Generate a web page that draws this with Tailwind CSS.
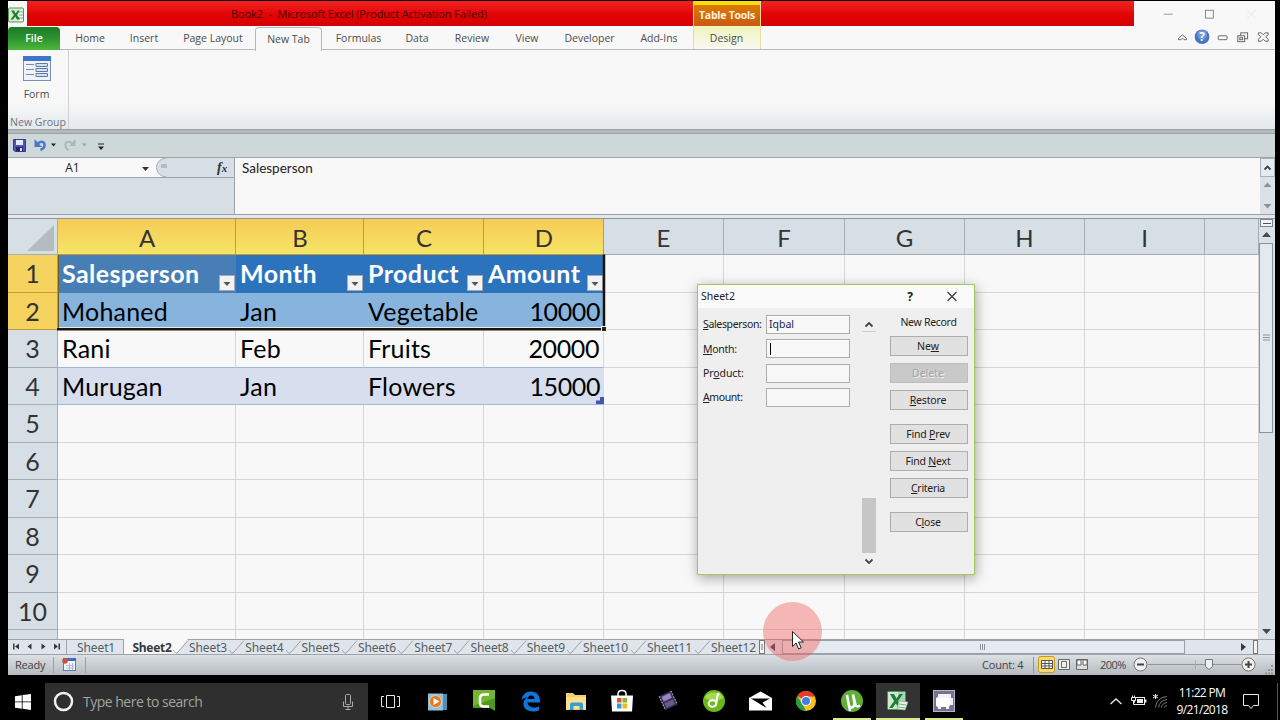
<!DOCTYPE html>
<html>

<head>
    <meta charset="utf-8">
    <script src="https://cdn.jsdelivr.net/npm/@tailwindcss/browser@4"></script>
    <title>Book2 - Microsoft Excel</title>
</head>

<body class="bg-black">
    <div class="relative flex flex-col w-[1280px] h-[720px] overflow-hidden bg-black pt-px font-['Open_Sans',sans-serif]">

        <!-- excel window -->
        <div class="ml-2 w-[1267px] h-[674px] flex flex-col bg-[#f8f8f8] shrink-0">

            <!-- title bar and ribbon tabs -->
            <div class="flex h-[49px] shrink-0 border-b border-[#b3bcbc] relative">
                <div class="flex flex-col w-[685px]">
                    <div class="flex h-[25px]">
                        <div class="w-[19px] flex items-center pt-[2px]">
                            <svg width="16" height="16" viewBox="0 0 16 16">
                                <rect x=".5" y="1" width="15" height="14" rx="1" fill="#d8ead6" stroke="#4f9a50" />
                                <rect x="11" y="3" width="4" height="11" fill="#fff" />
                                <path d="M11 5h4M11 8h4M11 11h4" stroke="#5fa560" />
                                <path d="M3 3.500h3l1.700 3L9.700 3.500h2L9 8l3.200 4.500H9L7.300 9.600 5 12.500H2.500L6 8z" fill="#1e7a2e" />
                            </svg>
                        </div>
                        <div class="flex-1 bg-linear-to-b from-[#f42020] via-[#e40505] to-[#d40000] text-[11px] leading-[26px] text-[#4a0000] pl-[204px] whitespace-pre tracking-[-0.1px]">Book2  -  Microsoft Excel (Product Activation Failed)</div>
                    </div>
                    <div class="flex h-[23px] mt-[1px] text-[10.5px] leading-[23px] text-[#4c4c4c] text-center">
                        <div class="w-[52px] rounded-t-sm bg-linear-to-b from-[#1d7a24] via-[#2b9430] to-[#4db83c] text-white font-semibold">File</div>
                        <div class="w-[3px]"></div>
                        <div class="w-[54px]">Home</div>
                        <div class="w-[54px]">Insert</div>
                        <div class="w-[84px]">Page Layout</div>
                        <div class="w-[67px] border border-b-0 border-[#b3bcbc] rounded-t-sm bg-[#f8f8f8] h-6 leading-[22px] z-10">New Tab</div>
                        <div class="w-[73px]">Formulas</div>
                        <div class="w-[44px]">Data</div>
                        <div class="w-[66px]">Review</div>
                        <div class="w-[44px]">View</div>
                        <div class="w-[81px]">Developer</div>
                        <div class="w-[58px]">Add-Ins</div>
                    </div>
                </div>
                <div class="w-[68px] flex flex-col text-center border-x border-[#e8dba0]">
                    <div class="h-[25px] bg-linear-to-b from-[#dd7a00] to-[#c85a10] border-t-4 border-[#f8dc10] text-[10.5px] leading-[21px] font-bold text-[#fff3e0] whitespace-nowrap tracking-[-0.25px]">Table Tools</div>
                    <div class="h-[23px] bg-linear-to-b from-[#f0f5b8] to-[#f8f8f4] text-[10.5px] leading-[25px] pr-px text-[#4c4c4c]">Design</div>
                </div>
                <div class="w-[373px] h-[25px] bg-linear-to-b from-[#f42020] via-[#e40505] to-[#d40000]"></div>
                <div class="flex-1 flex flex-col">
                    <svg width="141" height="49" viewBox="1134 1 141 49" fill="none">
                        <path d="M1163 14.500h9" stroke="#999" />
                        <rect x="1205.500" y="10.500" width="8" height="8" stroke="#888" />
                        <path d="M1248 10l9 9M1257 10l-9 9" stroke="#e6e6e6" />
                        <path d="M1178 40.500v-1.500l4-3.500 4 3.500v1.500h-2.500l-1.500-1.500-1.500 1.500z" stroke="#666" />
                        <circle cx="1202" cy="37.500" r="7.500" fill="#4377c4" />
                        <circle cx="1202" cy="35.500" r="5" fill="#6a98da" />
                        <text x="1202" y="42" font-size="12" font-weight="700" text-anchor="middle" fill="#fff">?</text>
                        <rect x="1218.500" y="36.500" width="9" height="4" rx="1" stroke="#666" />
                        <rect x="1241.500" y="33.500" width="7" height="6" stroke="#666" />
                        <rect x="1238.500" y="36.500" width="7" height="6" fill="#f8f8f8" stroke="#666" />
                        <rect x="1240.500" y="38.500" width="3" height="2" stroke="#666" />
                        <path d="M1259.500 33.500h3l2 2 2-2h3v2l-2.500 2 2.500 2.500v2h-3l-2-2-2 2h-3v-2l2.500-2.500-2.500-2z" stroke="#666" />
                    </svg>
                </div>
            </div>

            <!-- ribbon -->
            <div class="flex h-[79px] shrink-0 bg-linear-to-b from-[#f8f8f8] from-65% to-[#e4e8eb]">
                <div class="w-[61px] flex flex-col items-center border-r border-[#cdd2d6] text-[#4c4c4c]">
                    <svg class="mt-[6px] mr-[2px]" width="28" height="26" viewBox="0 0 28 26">
                        <rect x=".5" y=".5" width="27" height="24" fill="#eef2fa" stroke="#7a90b8" />
                        <rect x="0" y="0" width="28" height="5" fill="#3f74c8" />
                        <path d="M3 8.500h8M3 13.500h8M3 18.500h8" stroke="#7c8ba8" />
                        <path d="M13 7.500h11.500v3H13zM13 12.500h11.500v3H13zM13 17.500h11.500v3H13z" fill="#d6dff0" stroke="#6478a4" />
                    </svg>
                    <div class="text-[10.5px] leading-[14px] mt-[5px] mr-[3px]">Form</div>
                    <div class="text-[10.5px] leading-[14px] mt-[14px] text-[#6c747c] whitespace-nowrap">New Group</div>
                </div>
            </div>
            <div class="h-[5px] shrink-0 bg-[#b3b8bc] border-t border-b border-[#9aa0a5]"></div>

            <!-- quick access toolbar -->
            <div class="h-[23px] shrink-0 bg-[#ced8d9] flex items-center">
                <svg width="110" height="23" viewBox="8 134 110 23" fill="none">
                    <path d="M13.500 139.500h12v12h-10.500l-1.500-1.500z" fill="#4d55b8" stroke="#34389a" />
                    <rect x="16" y="140" width="7" height="5" fill="#e8ecf8" />
                    <rect x="16" y="147" width="7" height="4" fill="#22266a" />
                    <rect x="20" y="148" width="2" height="3" fill="#dde" />
                    <path d="M38 143.500c3-3 7-2 6.500 2 0 2-1.500 3.500-4 4.500" stroke="#4a78cc" stroke-width="2.500" />
                    <path d="M34.500 139v8h7.500z" fill="#4a78cc" />
                    <path d="M51 143.500h5l-2.500 3zM98 146.500h6l-3 3.500z" fill="#222" />
                    <path d="M98 144h6" stroke="#222" />
                    <path d="M72 143.500c-3-3-7-2-6.500 2 0 2 1 3.500 3 4.500" stroke="#aeb6b8" stroke-width="2" />
                    <path d="M75.500 139v7h-6.500z" fill="#aeb6b8" />
                    <path d="M82 143.500h4.500l-2.200 3z" fill="#9aa2a5" />
                </svg>
            </div>

            <!-- formula bar -->
            <div class="flex h-[58px] shrink-0 border-t border-b border-[#9da3a8]">
                <div class="w-[227px] bg-[#d7dfe6] border-r border-[#9da3a8]">
                    <div class="flex h-[20px] border-b border-[#9da3a8] items-center">
                        <div class="w-[129px] h-full bg-[#f8f8f8] text-center text-[12px] leading-[20px] text-[#222]">A1</div>
                        <svg width="97" height="19" viewBox="137 158 97 19">
                            <rect x="137" y="158" width="26" height="19" fill="#f8f8f8" />
                            <rect x="163" y="158" width="71" height="19" fill="#d7dfe6" />
                            <path d="M166 158.200a9.500 9.300 0 0 0 0 18.600" fill="#d7dfe6" stroke="#a8aeb2" />
                            <rect x="161" y="164" width="6" height="4" rx="1" fill="#b4babf" />
                            <path d="M142 167h7l-3.500 4z" fill="#333" />
                            <text x="217" y="172" font-family="Liberation Serif" font-style="italic" font-weight="700" font-size="14" fill="#333">f<tspan font-size="11">x</tspan></text>
                        </svg>
                    </div>
                </div>
                <div class="flex-1 pl-[7px] font-[Lato,sans-serif] text-[13.5px] leading-[20px] text-[#222]">Salesperson</div>
                <svg width="15" height="56" viewBox="0 0 15 56">
                    <rect width="15" height="56" fill="#dbe2e7" />
                    <rect x=".5" y=".5" width="14" height="18" fill="#e6ebef" stroke="#a9b1b8" />
                    <path d="M4.500 11.500l3-3 3 3" stroke="#444" stroke-width="1.800" fill="none" />
                    <path d="M3.500 29h8l-4-4.500zM3.500 46h8l-4 4.500z" fill="#8a9297" />
                </svg>
            </div>
            <div class="h-[4px] shrink-0 bg-[#e3e8ee] border-b border-[#8e969c]"></div>

            <!-- sheet -->
            <div class="flex h-[420px] shrink-0">
                <div id="sheet" class="relative w-[1251px] h-[420px] overflow-hidden font-[Lato,sans-serif]"></div>
                <svg width="16" height="420" viewBox="1259 219 16 420">
                    <rect x="1259" y="219" width="16" height="420" fill="#dbe2e7" />
                    <rect x="1260.500" y="219.500" width="12" height="7" fill="#f2f4f6" stroke="#7d858b" />
                    <path d="M1263 223.500h8" stroke="#555" />
                    <path d="M1262 237h9l-4.500-5zM1262 629h9l-4.500 5z" fill="#444c52" />
                    <rect x="1259.500" y="243.500" width="13" height="189" fill="#e4e9ee" stroke="#8b949c" />
                    <path d="M1263 335h7M1263 337.500h7M1263 340h7" stroke="#8b949c" />
                </svg>
            </div>

            <!-- sheet tabs and horizontal scroll -->
            <div class="flex h-[16px] shrink-0 border-t border-b border-[#9da3a8] bg-[#dfe5ea]">
                <svg class="shrink-0" width="58" height="14" viewBox="8 640 58 14" fill="#333b42">
                    <path d="M13 643.500h1.500v6H13zM19 643.500v6l-4-3zM31.500 643.500v6l-4-3zM41.500 643.500v6l4-3zM54 643.500v6l4-3zM58.500 643.500H60v6h-1.500z" />
                </svg>
                <div id="tabs" class="flex h-[14px] w-[693px] text-[12px] leading-[16px] text-[#555d63] font-['Noto_Sans',sans-serif]"></div>
                <svg class="shrink-0" width="508" height="14" viewBox="759 640 508 14">
                    <rect x="759.500" y="640.500" width="5" height="13" fill="#f4f4f4" stroke="#777" />
                    <path d="M762 644v6" stroke="#777" />
                    <path d="M775 643v8l-5-4zM1241 643v8l5-4z" fill="#333b42" />
                    <rect x="782.500" y="640.500" width="402" height="13" fill="#e6ebf0" stroke="#9aa2a9" />
                    <path d="M980.500 644v6M982.500 644v6M984.500 644v6" stroke="#8b949c" />
                    <rect x="1253.500" y="640.500" width="4" height="13" fill="#f4f4f4" stroke="#777" />
                </svg>
            </div>

            <!-- status bar -->
            <div class="flex flex-1 bg-linear-to-b from-[#dde1e4] to-[#b4babf] text-[11px] leading-[20px] text-[#444]">
                <div class="w-[44px] pl-[7px] tracking-[-0.2px]">Ready</div>
                <svg width="930" height="20" viewBox="52 655 930 20">
                    <path d="M53.500 657v16M85.500 657v16" stroke="#9aa0a6" />
                    <rect x="63.500" y="658.500" width="12" height="12" fill="#f4f7fc" stroke="#5a7ab8" />
                    <rect x="63" y="658" width="13" height="3" fill="#3f6cc0" />
                    <path d="M66 665.500h8M66 668h8M69.500 663v7M72.500 663v7" stroke="#a8b8d8" />
                    <circle cx="65" cy="661" r="2.800" fill="#cc5236" />
                </svg>
                <div class="w-[51px] whitespace-nowrap tracking-[-0.2px]">Count: 4</div>
                <svg width="66" height="20" viewBox="1033 655 66 20" fill="none">
                    <path d="M1033.500 657v16" stroke="#8b9298" />
                    <rect x="1038.500" y="656.500" width="16" height="16" rx="2" fill="#fbd96a" stroke="#c79a20" />
                    <path d="M1041.500 660.500h11v8h-11zM1041 663.500h12M1041 666h12M1045 660v9M1049 660v9" stroke="#555" fill="#fff" />
                    <path d="M1058.500 659.500h11v10h-11zM1061.500 661.500h5v6h-5z" stroke="#666" fill="#eee" />
                    <path d="M1076.500 659.500h11v10h-11z" stroke="#666" fill="#ddd" />
                    <path d="M1077 660h4v5h-4zM1083 660h4v5h-4z" stroke="#666" fill="#fff" />
                </svg>
                <div class="w-[30px] pl-px whitespace-nowrap tracking-[-0.5px]">200%</div>
                <svg width="138" height="20" viewBox="1129 655 138 20" fill="none">
                    <path d="M1148 664.500h93" stroke="#8f979d" />
                    <path d="M1195.500 660v9" stroke="#a8afb5" />
                    <circle cx="1140.500" cy="664.500" r="6.500" fill="#eef0f2" stroke="#777" />
                    <path d="M1137 664.500h7" stroke="#444" stroke-width="2" />
                    <path d="M1205.500 659.500h7v7l-3.500 3-3.500-3z" fill="#eef0f2" stroke="#777" />
                    <circle cx="1248.500" cy="664.500" r="6.500" fill="#eef0f2" stroke="#777" />
                    <path d="M1245 664.500h7M1248.500 661v7" stroke="#444" stroke-width="2" />
                </svg>
                <svg class="-ml-[2px]" width="10" height="20" viewBox="0 0 10 20">
                    <path d="M6 11h2M3 15h2M6 15h2M0 18.500h2M3 18.500h2M6 18.500h2" stroke="#8b9298" stroke-width="2" />
                </svg>
            </div>
        </div>

        <!-- taskbar -->
        <div class="flex w-[1280px] mt-[8px] h-[37px] shrink-0 items-stretch">
            <div class="w-[45px] flex items-center justify-center">
                <svg width="16" height="16" viewBox="0 0 16 16" fill="#fff">
                    <path d="M0 2.200L6.800 1.200v6.300H0zM7.600 1.100L16 0v7.500H7.600zM0 8.300h6.800v6.400L0 13.800zM7.600 8.300H16V16l-8.400-1.200z" />
                </svg>
            </div>
            <div class="w-[323px] bg-[#2f2f2f] flex items-center pl-[8px] pr-[14px]">
                <svg width="21" height="21" viewBox="0 0 21 21">
                    <circle cx="10.500" cy="10.500" r="8.500" fill="none" stroke="#f2f2f2" stroke-width="2.500" />
                </svg>
                <div class="flex-1 pl-[9px] text-[14px] leading-[20px] text-[#a3a3a3] tracking-[-0.5px]">Type here to search</div>
                <svg width="12" height="16" viewBox="0 0 12 16" fill="none" stroke="#aaa">
                    <rect x="3.500" y=".5" width="5" height="10" rx="1" />
                    <path d="M1.500 7.500v5h9v-5M6 12.500V15M3.500 15.500h5" />
                </svg>
            </div>
            <svg width="600" height="37" viewBox="368 683 600 37" fill="none">
                <!-- task view -->
                <path d="M386.500 695.500h8v12h-8zM384 696.500h-2.500v10H384M397 696.500h2.500v10H397" stroke="#e8e8e8" />
                <!-- media player -->
                <rect x="433" y="694" width="14" height="16" fill="#4f8fb8" />
                <rect x="428" y="693.500" width="15" height="17" fill="#8fc3e2" />
                <circle cx="435.500" cy="701.500" r="6" fill="#e87722" stroke="#f5c9a0" />
                <path d="M433.500 698v7l6-3.500z" fill="#fff" />
                <!-- camtasia -->
                <path d="M473 690h22v21l-5-3h-17z" fill="#4f9a1e" />
                <path d="M473 690h22v8l-22 8z" fill="#72b52e" />
                <path d="M489 694.500h-5q-4 0-4 4v4q0 4 4 4h5" stroke="#fff" stroke-width="2.600" />
                <!-- edge -->
                <path d="M521.500 700c1-6 5-8.500 9.500-8.500 5.500 0 9 4 9 9v2h-12.500c.3 3.500 3.500 5 6.500 5 2 0 4-.5 5-1.300v4c-1.500.9-4 1.300-6 1.300-6 0-10.500-4-9.500-9 .5-2.500 2-4 4-5-2.500.2-5 1-6 2.500zM527.500 699h7c0-2.500-1.300-3.500-3.300-3.500s-3.400 1.300-3.700 3.500z" fill="#1176d8" fill-rule="evenodd" />
                <!-- explorer -->
                <path d="M566 693h7l2 2h11v15h-20z" fill="#f3cf6b" />
                <path d="M566 697h20v12h-20z" fill="#fbe08f" />
                <path d="M570 710v-5.500q0-2 2-2h9q2 0 2 2v5.500h-3.500v-4h-6v4z" fill="#36a0d4" />
                <!-- store -->
                <path d="M618 696v-2q0-3.500 4-3.500t4 3.500v2" stroke="#fff" stroke-width="1.500" />
                <path d="M611 695.500h22l-1 16h-20z" fill="#fff" />
                <path d="M617 698h4.500v4.500H617z" fill="#e8512a" />
                <path d="M622.500 698h4.500v4.500h-4.500z" fill="#7fb92c" />
                <path d="M617 703.500h4.500v5H617z" fill="#2a9fe0" />
                <path d="M622.500 703.500h4.500v5h-4.500z" fill="#f8b518" />
                <!-- movie strip -->
                <g transform="rotate(-25 668 700)">
                    <path d="M661 693h14v15h-14z" fill="#3b3450" />
                    <path d="M663.500 694.500h9v5h-9z" fill="#9a83c8" />
                    <path d="M663.500 701.500h9v5h-9z" fill="#6a5a92" />
                    <path d="M661.500 693v15M674.500 693v15" stroke="#b8b4c4" stroke-dasharray="1.500 1.500" />
                </g>
                <!-- dj -->
                <circle cx="714" cy="701" r="11" fill="#6cb81c" />
                <path d="M704.500 698a10 8 0 0 1 19 0q-9.500 5-19 0z" fill="#a4d850" />
                <ellipse cx="712.500" cy="703.500" rx="3.800" ry="3.200" stroke="#fff" stroke-width="2" />
                <path d="M715.500 705.500q1.500-4 1.500-8 .3-3.500 2.500-4" stroke="#fff" stroke-width="2" />
                <!-- mail -->
                <path d="M749 698l11.500-6.500L772 698v12.500h-23z" fill="#fff" />
                <path d="M751 698.500h19l-7.500 4 4 5.500z" fill="#000" />
                <!-- chrome -->
                <circle cx="806" cy="701" r="10" fill="#fbc116" />
                <path d="M797.300 696L802 703.500 806 711A10 10 0 0 1 797.300 696z" fill="#2a9c48" />
                <path d="M806 701L797.300 696A10 10 0 0 1 814.900 696.500H806z" fill="#e33b2e" />
                <circle cx="806" cy="701" r="5" fill="#fff" />
                <circle cx="806" cy="701" r="4" fill="#3f7fe8" />
                <!-- utorrent -->
                <circle cx="852" cy="701" r="11" fill="#5fae38" />
                <path d="M847 695l2 11q.5 2 2.500 1.500 3-.5 3-4l-1.500-9 2.500 10q1 3 4.500 1" stroke="#fff" stroke-width="2.500" />
                <path d="M849 705l1 6" stroke="#fff" stroke-width="2.500" />
                <!-- excel, active -->
                <rect x="876" y="683" width="44" height="37" fill="#333" />
                <rect x="887.500" y="691.500" width="18" height="18" rx="1" fill="#cfe8cf" stroke="#3f9a54" />
                <path d="M898 692h7v17h-7z" fill="#a9d8b0" />
                <path d="M890 694h4l2.500 4.500 3-4.500h3.500l-5 7 4.500 7h-4l-2.700-4.500-3.200 4.500h-3.500l5-7z" fill="#1d7f3a" />
                <path d="M899 701l9 1-3 8-8-1z" fill="#e8f4e8" stroke="#74b584" stroke-width=".7" />
                <path d="M899 704l7 1M898 707l7 1" stroke="#74b584" />
                <!-- recorder -->
                <rect x="933.500" y="690.500" width="21" height="21" fill="#77738f" stroke="#b8b5c8" />
                <rect x="936" y="697" width="14" height="10" rx="2" fill="#fff" />
                <path d="M938 694h13v4h-13zM950 698h3v7h-3zM938 707h3v2h-3zM946 707h3v2h-3z" fill="#f2f2f8" />
                <path d="M833 718h38v2h-38zM876 718h44v2h-44zM925 718h38v2h-38z" fill="#d8ea90" />
            </svg>
            <svg class="ml-[136px]" width="70" height="37" viewBox="1104 683 70 37" fill="none">
                <path d="M1110.500 704l5.500-5 5.500 5" stroke="#e8e8e8" stroke-width="1.300" />
                <rect x="1134.500" y="697.500" width="10" height="7" stroke="#eee" />
                <path d="M1137 699h6v4h-6zM1145 699.500h1.500v3H1145z" fill="#eee" />
                <path d="M1131.500 697.500h4v3h-4zM1132.500 695.500v2M1134.500 695.500v2M1133.500 701v3.500h2" stroke="#eee" fill="#000" />
                <path d="M1155.500 694v5M1153 695l5 3M1158 695l-5 3" stroke="#eee" />
                <path d="M1155.500 707.500q1-10 11.500-11M1158.500 707.500q1-7 8.500-8M1161.500 707.500q.5-4 5.500-5M1164.500 707.500q0-1.500 2.500-2" stroke="#7a7a7a" />
            </svg>
            <div class="w-[56px] text-[12px] leading-[17px] text-white text-center whitespace-nowrap tracking-[-0.65px] pt-px">11:22 PM<br>9/21/2018</div>
            <svg class="ml-[11px]" width="39" height="37" viewBox="1241 683 39 37" fill="none">
                <path d="M1243.500 694.500h15v11h-5l-2.500 3-2.500-3h-5z" stroke="#e8e8e8" />
                <path d="M1277.500 683v37" stroke="#555" />
            </svg>
        </div>

        <!-- data form -->
        <div class="absolute left-[697px] top-[284px] w-[278px] h-[291px] border border-[#a3c65a] bg-[#efefef] shadow-[1px_3px_12px_rgba(0,0,0,0.35)] font-['Noto_Sans',sans-serif] text-[10.5px] text-[#222] flex flex-col">
            <div class="flex h-[23px] bg-[#fafafa] leading-[23px] pl-[3px] shrink-0">
                <div class="w-[199px]">Sheet2</div>
                <div class="w-[20px] text-center font-bold text-[12px]">?</div>
                <svg class="ml-[26px]" width="12" height="23" viewBox="0 0 12 23">
                    <path d="M1.500 7l9 9M10.500 7l-9 9" stroke="#333" stroke-width="1.100" />
                </svg>
            </div>
            <div class="flex flex-1">
                <div class="w-[153px] pl-[5px] pt-[7px] flex flex-col gap-[5.400px]">
                    <div class="flex h-[19px] items-center"><div class="w-[63px] shrink-0 pt-px tracking-[-0.35px]"><u>S</u>alesperson:</div><div class="w-[84px] h-[19px] border border-[#adadad] bg-[#f8f8f8] pl-[2px] leading-[17px] text-[#1c2350]">Iqbal</div></div>
                    <div class="flex h-[19px] items-center"><div class="w-[63px] shrink-0 pt-px tracking-[-0.3px]"><u>M</u>onth:</div><div class="w-[84px] h-[19px] border border-[#adadad] bg-[#f8f8f8] pl-[3px] pt-[3px]"><div class="w-px h-[12px] bg-black"></div></div></div>
                    <div class="flex h-[19px] items-center"><div class="w-[63px] shrink-0 pt-px tracking-[-0.1px]">Pr<u>o</u>duct:</div><div class="w-[84px] h-[19px] border border-[#adadad] bg-[#f8f8f8]"></div></div>
                    <div class="flex h-[19px] items-center"><div class="w-[63px] shrink-0 pt-px tracking-[-0.4px]"><u>A</u>mount:</div><div class="w-[84px] h-[19px] border border-[#adadad] bg-[#f8f8f8]"></div></div>
                </div>
                <svg class="ml-[11px]" width="14" height="266" viewBox="862 308 14 266" fill="none">
                    <path d="M865.500 326.500l3.500-3.500 3.500 3.500M865.500 559.500l3.500 3.500 3.500-3.500" stroke="#444" stroke-width="1.800" />
                    <path d="M862 331.500h14" stroke="#ccc" />
                    <rect x="862" y="498" width="14" height="55" fill="#c6c6c6" />
                </svg>
                <div class="ml-[14px] w-[78px] flex flex-col text-center leading-[19px]">
                    <div class="mt-[5px] mb-[4px] whitespace-nowrap tracking-[-0.3px] pr-px">New Record</div>
                    <div class="h-[20px] border border-[#adadad] bg-[#e1e1e1] pr-[2px]">Ne<u>w</u></div>
                    <div class="mt-[7px] h-[20px] border border-[#bdbdbd] bg-[#c9c9c9] text-[#a2a2a2] text-shadow-[1px_1px_0_#f0f0f0] pr-[2px]">Delete</div>
                    <div class="mt-[7px] h-[20px] border border-[#adadad] bg-[#e1e1e1] pr-[2px] tracking-[-0.15px]"><u>R</u>estore</div>
                    <div class="mt-[14px] h-[20px] border border-[#adadad] bg-[#e1e1e1] pr-[2px] tracking-[-0.2px]">Find <u>P</u>rev</div>
                    <div class="mt-[7px] h-[20px] border border-[#adadad] bg-[#e1e1e1] pr-[2px] tracking-[-0.2px]">Find <u>N</u>ext</div>
                    <div class="mt-[7px] h-[20px] border border-[#adadad] bg-[#e1e1e1] pr-[2px] tracking-[-0.3px]"><u>C</u>riteria</div>
                    <div class="mt-[14px] h-[20px] border border-[#adadad] bg-[#e1e1e1] pr-[2px] tracking-[-0.2px]">C<u>l</u>ose</div>
                </div>
            </div>
        </div>

        <!-- mouse pointer with click highlight -->
        <svg class="absolute left-[762px] top-[601px]" width="60" height="60" viewBox="0 0 60 60">
            <circle cx="30.500" cy="30.500" r="29.500" fill="#f05a5a" fill-opacity=".42" />
            <path d="M30.500 30.500v15l3.500-3.500 2.700 6 2.500-1.200-2.700-5.800h5z" fill="#fff" stroke="#222" />
        </svg>
    </div>

    <script>
        var sheet = document.getElementById("sheet");
        var columns = ["A", "B", "C", "D", "E", "F", "G", "H", "I", ""];
        var data = [
            ["Salesperson", "Month", "Product", "Amount"],
            ["Mohaned", "Jan", "Vegetable", "10000"],
            ["Rani", "Feb", "Fruits", "20000"],
            ["Murugan", "Jan", "Flowers", "15000"]
        ];
        var rowStart = '<div class="grid grid-cols-[50px_178px_128px_120px_120px_120px_121px_120px_120px_120px_54px] ';

        // column letters
        var html = rowStart + 'h-[36px] grid-rows-[36px] text-[24px] leading-[38px] text-center text-[#333]">';
        html += '<div class="bg-[#d7dfe6] border-r border-b border-[#a5adb5] flex items-end justify-end pr-[3px] pb-[3px]"><svg width="27" height="26" viewBox="0 0 27 26"><path d="M27 0v26H0z" fill="#b4bcbf" /></svg></div>';
        for (var i = 0; i < columns.length; i++) {
            if (i < 4) {
                html += '<div class="pl-px bg-linear-to-b from-[#f6cb55] to-[#f5e566] border-r border-b border-[#c39a3c]">' + columns[i] + '</div>';
            } else {
                html += '<div class="bg-[#d7dfe6] border-r border-b border-[#a5adb5]">' + columns[i] + '</div>';
            }
        }
        html += '</div>';

        // rows are 37.5px high, so every second one is a pixel shorter
        for (var r = 1; r <= 11; r++) {
            html += rowStart + (r % 2 == 1 ? 'h-[38px] grid-rows-[38px] ' : 'h-[37px] grid-rows-[37px] ') + 'text-[25px] leading-[37px] text-black">';
            html += '<div class="text-center border-r border-b text-[#333] ' + (r <= 2 ? 'bg-[#f6d35e] border-[#c39a3c]' : 'bg-[#d7dfe6] border-[#a5adb5]') + '">' + (r < 11 ? r : '') + '</div>';
            for (var c = 0; c < columns.length; c++) {
                var text = r <= 4 && c < 4 ? data[r - 1][c] : '';
                var look = 'border-r border-b border-[#d6d6d6]';
                if (c < 4 && r == 1) look = 'relative font-bold text-white tracking-[0.4px] ' + (c == 0 ? 'bg-[#467eb5]' : 'bg-[#2b73bd]');
                if (c < 4 && r == 2) look = 'bg-[#86b4dd]';
                if (c < 4 && r == 3) look = 'border-r border-b border-[#d6d6d6] border-b-[#9db8d8]';
                if (c < 4 && r == 4) look = 'bg-[#d7deee] border-b border-[#9db8d8]';
                if (c < 3 && r > 1) look += ' tracking-[0.2px]';
                if (c == 3 && r > 1) look += ' text-right pr-[4px] tracking-[-0.4px]';
                html += '<div class="pl-[4px] whitespace-nowrap ' + look + '">' + text;
                if (r == 1 && c < 4) {
                    html += '<svg class="absolute right-px bottom-[2px]" width="16" height="16" viewBox="0 0 16 16"><rect x=".5" y=".5" width="15" height="15" fill="#f2f3f5" stroke="#a8acb2" /><path d="M4.500 7h7L8 11z" fill="#555" /></svg>';
                }
                html += '</div>';
            }
            html += '</div>';
        }

        // selection outline A1:D2 and the table's corner handle
        html += '<svg class="absolute left-[49px] top-[35px]" width="550" height="152" viewBox="57 254 550 152" fill="none"><path d="M58 327.500h545" stroke="#dfe9f2" /><path d="M58.500 329V255" stroke="#6b5a2a" /><path d="M57 329.300h545M604 254.500V326" stroke="#1c1408" stroke-width="2.500" /><rect x="601.500" y="326.500" width="5" height="5" fill="#222" stroke="#f8f8f8" /><path d="M600 397h4v7h-8v-3.500h4z" fill="#4656a8" /></svg>';
        sheet.innerHTML = html;

        var tabs = document.getElementById("tabs");
        var tabHtml = '';
        for (var t = 1; t <= 12; t++) {
            if (t == 2) {
                tabHtml += '<div class="w-[53px] h-[15px] shrink-0 bg-[#f8f8f8] -mt-px pt-px pl-[4px] text-center font-bold tracking-[-0.3px] text-[#333b42] border-l border-[#9da3a8]">Sheet2</div>';
            } else if (t == 1) {
                tabHtml += '<div class="w-[57px] shrink-0 pl-[10px] tracking-[-0.1px] border-l border-[#9da3a8]">Sheet1</div>';
            } else {
                tabHtml += '<div class="flex shrink-0 whitespace-nowrap tracking-[-0.1px] ' + (t > 9 ? 'w-[64px]' : 'w-[56.300px]') + '"><svg class="-ml-px shrink-0 overflow-visible" width="14" height="14" viewBox="0 0 14 14"><path d="' + (t == 3 ? 'M0 -1H13L3 12 1 14H0z' : 'M0 0z') + '" fill="#f8f8f8" /><path d="M-2 10L1 13.500 3 12 13 .5" fill="none" stroke="#9da3a8" /></svg>Sheet' + t + '</div>';
            }
        }
        tabs.innerHTML = tabHtml;
    </script>
</body>

</html>
